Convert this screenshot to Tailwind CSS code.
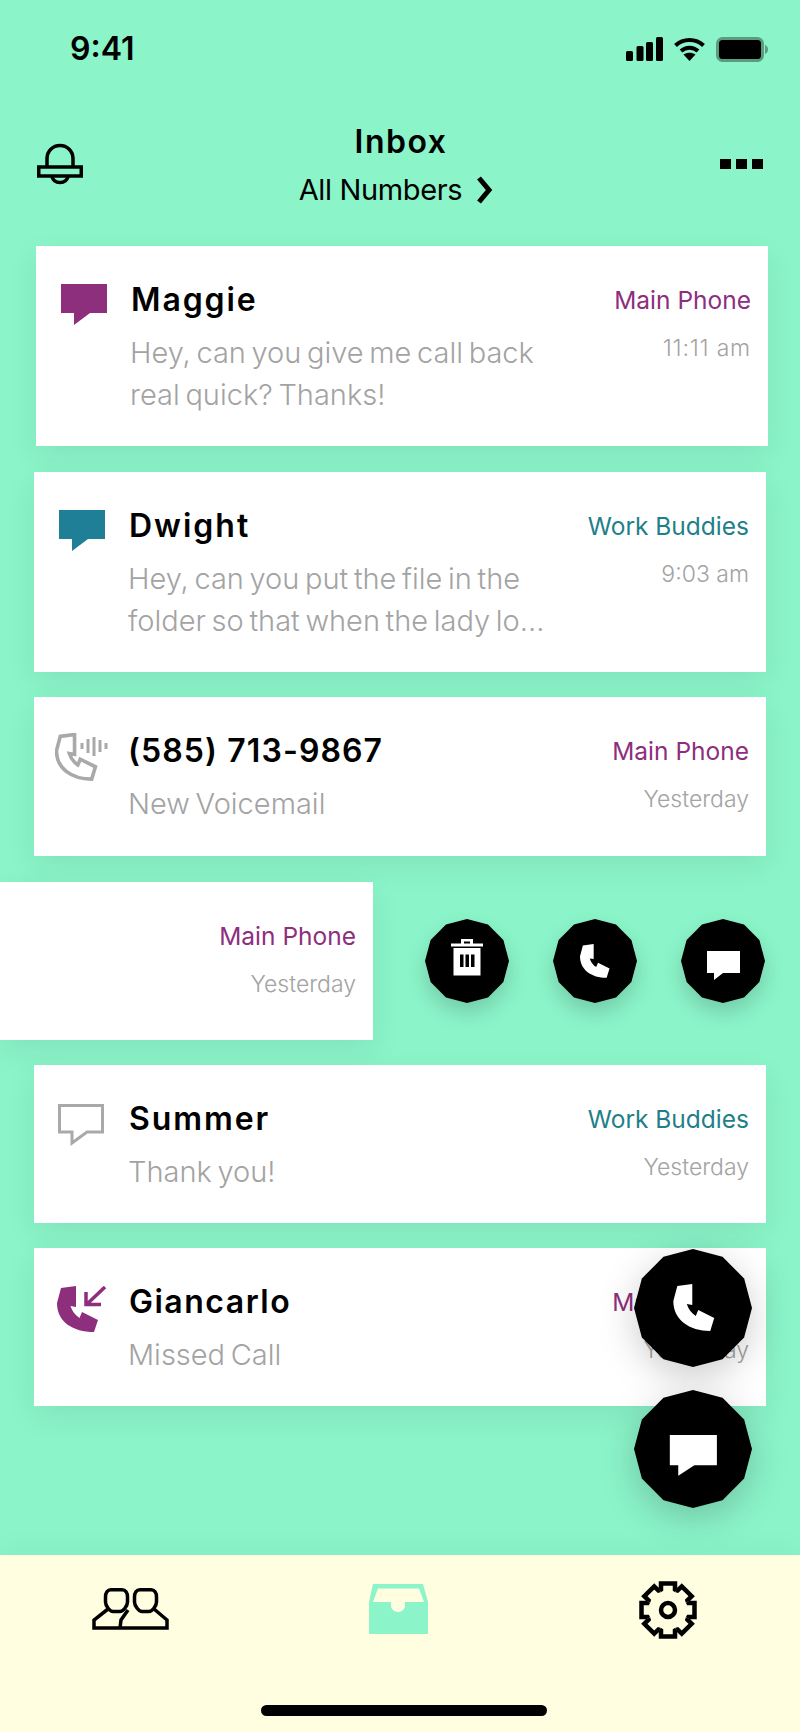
<!DOCTYPE html>
<html lang="en">
<head>
    <meta charset="UTF-8">
    <meta name="viewport" content="width=device-width, initial-scale=1.0">
    <title>Inbox</title>
    <script src="https://cdn.jsdelivr.net/npm/@tailwindcss/browser@4"></script>
</head>
<body class="bg-[#8bf4c9] font-[Inter,sans-serif] text-black">
<div class="relative w-[800px] h-[1732px] overflow-hidden flex flex-col">

    <!-- Status bar -->
    <div class="flex items-center justify-between h-[24px] mt-[37px] pl-[70px] pr-[32px]">
        <span class="text-[32px] leading-[24px] font-semibold">9:41</span>
        <div class="flex items-center">
            <svg width="37" height="24" viewBox="0 0 37 24"><rect x="0" y="14" width="7" height="10" rx="1.5"/><rect x="10.500" y="9" width="7" height="15" rx="1.5"/><rect x="20" y="5" width="7" height="19" rx="1.5"/><rect x="30" y="0" width="7" height="24" rx="1.5"/></svg>
            <svg class="ml-[10px]" width="33" height="24" viewBox="0 0 33 24"><path d="M2.500 8.500C10 1 23 1 30.500 8.500M8 14C13 9.500 20 9.500 25 14" fill="none" stroke="#000" stroke-width="4"/><path d="M16.500 24L10.500 17.500C14 15 19 15 22.500 17.500Z"/></svg>
            <svg class="ml-[10px]" width="52" height="25" viewBox="0 0 52 25"><rect x="1.500" y="1.500" width="45" height="22" rx="5" fill="#000" stroke="#5b9c80" stroke-width="3"/><path d="M49 8c2 1 3 2 3 4.500s-1 3.500-3 4.500z" fill="#5b9c80"/></svg>
        </div>
    </div>

    <!-- Header -->
    <div class="relative flex justify-center h-[119px] mt-[66px]">
        <svg class="absolute left-[37px] top-[16px]" width="46" height="43" viewBox="0 0 46 43" fill="none" stroke="#000" stroke-width="3.500"><path d="M10 24V15.500a13 13 0 0 1 26 0V24"/><rect x="1.750" y="24" width="42.500" height="9"/><path d="M15 33a8 6.500 0 0 0 16 0"/></svg>
        <div class="flex flex-col items-center">
            <div class="text-[32px] leading-[30px] font-semibold tracking-[1.5px] ml-[2px]">Inbox</div>
            <div class="flex items-center mt-[17px] mr-[8px]">
                <span class="text-[29px] leading-[32px] tracking-[-0.35px]">All Numbers</span>
                <svg class="ml-[14px]" width="17" height="28" viewBox="0 0 17 28" fill="none" stroke="#000" stroke-width="5"><path d="M3 2L13 14L3 26"/></svg>
            </div>
        </div>
        <div class="absolute left-[720px] top-[32px] flex gap-[5px]">
            <div class="w-[11px] h-[10px] bg-black"></div>
            <div class="w-[11px] h-[10px] bg-black"></div>
            <div class="w-[11px] h-[10px] bg-black"></div>
        </div>
    </div>

    <!-- Message list -->
    <div class="flex flex-col">

        <div class="flex w-[732px] h-[200px] ml-[36px] bg-white shadow-[0_10px_30px_rgba(0,0,0,0.07)] pt-[34px] pl-[25px] pr-[17px]">
            <div class="w-[70px] pt-[4px]">
                <svg width="46" height="42" viewBox="0 0 46 42" fill="#8d2f7d"><path d="M0 0H46V29H29L13 41V29H0Z"/></svg>
            </div>
            <div class="flex-1">
                <div class="text-[32px] leading-[40px] font-semibold tracking-[1.9px]">Maggie</div>
                <div class="mt-[12px] -ml-[1px] text-[29px] leading-[42px] font-light [word-spacing:-2.5px] text-[#a3a3a3] whitespace-nowrap">Hey, can you give me call back<br>real quick? Thanks!</div>
            </div>
            <div class="text-right">
                <div class="text-[24.500px] leading-[40px] text-[#8d2f7d]">Main Phone</div>
                <div class="mt-[12px] text-[23px] leading-[32px] font-light tracking-[0.8px] text-[#a3a3a3]">11:11 am</div>
            </div>
        </div>

        <div class="flex w-[732px] h-[200px] ml-[34px] mt-[26px] bg-white shadow-[0_10px_30px_rgba(0,0,0,0.07)] pt-[34px] pl-[25px] pr-[17px]">
            <div class="w-[70px] pt-[4px]">
                <svg width="46" height="42" viewBox="0 0 46 42" fill="#1f7f96"><path d="M0 0H46V29H29L13 41V29H0Z"/></svg>
            </div>
            <div class="flex-1">
                <div class="text-[32px] leading-[40px] font-semibold tracking-[2px]">Dwight</div>
                <div class="mt-[12px] -ml-[1px] text-[29px] leading-[42px] font-light [word-spacing:-2.5px] text-[#a3a3a3] whitespace-nowrap">Hey, can you put the file in the<br>folder so that when the lady lo...</div>
            </div>
            <div class="text-right">
                <div class="text-[24.500px] leading-[40px] text-[#1f7f8a]">Work Buddies</div>
                <div class="mt-[12px] text-[23px] leading-[32px] font-light text-[#a3a3a3]">9:03 am</div>
            </div>
        </div>

        <div class="flex w-[732px] h-[159px] ml-[34px] mt-[25px] bg-white shadow-[0_10px_30px_rgba(0,0,0,0.07)] pt-[34px] pl-[21px] pr-[17px]">
            <div class="w-[74px] pt-[2px]">
                <svg width="54" height="50" viewBox="0 0 54 50" fill="none" stroke="#a9a9a9"><path transform="translate(1.500 1.500) scale(0.95)" stroke-width="3.800" d="M4 2L19 0V21L13.500 20C15 25 18 29 22.500 32L25 26L41 34L37 47C16 47 0 36 0 17Z"/><path stroke-width="3" d="M27 10V16M33 6V20M39 4V23M45 7V19M51 10V16"/></svg>
            </div>
            <div class="flex-1">
                <div class="text-[32px] leading-[40px] font-semibold tracking-[1.1px] -ml-[1px]">(585) 713-9867</div>
                <div class="mt-[12px] -ml-[1px] text-[29px] leading-[42px] font-light [word-spacing:-2.5px] text-[#a3a3a3]">New Voicemail</div>
            </div>
            <div class="text-right">
                <div class="text-[24.500px] leading-[40px] text-[#8d2f7d]">Main Phone</div>
                <div class="mt-[12px] text-[23px] leading-[32px] font-light text-[#a3a3a3]">Yesterday</div>
            </div>
        </div>

        <!-- Swiped row with its actions -->
        <div class="flex items-center mt-[26px] h-[158px]">
            <div class="w-[373px] h-[158px] bg-white shadow-[0_10px_30px_rgba(0,0,0,0.07)] pt-[34px] pr-[17px] text-right">
                <div class="text-[24.500px] leading-[40px] text-[#8d2f7d]">Main Phone</div>
                <div class="mt-[12px] text-[23px] leading-[32px] font-light text-[#a3a3a3]">Yesterday</div>
            </div>
            <div class="flex gap-[44px] ml-[52px]">
                <svg class="drop-shadow-[0_10px_10px_rgba(0,0,0,0.16)]" width="84" height="84" viewBox="0 0 84 84"><polygon points="42,0 63,5.600 78.400,21 84,42 78.400,63 63,78.400 42,84 21,78.400 5.600,63 0,42 5.600,21 21,5.600"/><path fill="#fff" d="M26 24.500H36V20H48V24.500H58V27.500H26ZM39 24.500H45V22.500H39ZM28.500 29H55.500V56.500H28.500Z"/><path fill="#000" d="M35 35.500H38.500V48H35ZM40.500 35.500H44V48H40.500ZM46 35.500H49.500V48H46Z"/></svg>
                <svg class="drop-shadow-[0_10px_10px_rgba(0,0,0,0.16)]" width="84" height="84" viewBox="0 0 84 84"><polygon points="42,0 63,5.600 78.400,21 84,42 78.400,63 63,78.400 42,84 21,78.400 5.600,63 0,42 5.600,21 21,5.600"/><path fill="#fff" transform="translate(27 25) scale(0.72)" d="M4 2L19 0V21L13.500 20C15 25 18 29 22.500 32L25 26L41 34L37 47C16 47 0 36 0 17Z"/></svg>
                <svg class="drop-shadow-[0_10px_10px_rgba(0,0,0,0.16)]" width="84" height="84" viewBox="0 0 84 84"><polygon points="42,0 63,5.600 78.400,21 84,42 78.400,63 63,78.400 42,84 21,78.400 5.600,63 0,42 5.600,21 21,5.600"/><path fill="#fff" d="M26 32H59V54H42L33 61V54H26Z"/></svg>
            </div>
        </div>

        <div class="flex w-[732px] h-[158px] ml-[34px] mt-[25px] bg-white shadow-[0_10px_30px_rgba(0,0,0,0.07)] pt-[34px] pl-[24px] pr-[17px]">
            <div class="w-[71px] pt-[5px]">
                <svg width="46" height="42" viewBox="0 0 46 42" fill="none" stroke="#a9a9a9" stroke-width="3"><path d="M1.500 1.500H44.500V28H29L14 39V28H1.500Z"/></svg>
            </div>
            <div class="flex-1">
                <div class="text-[32px] leading-[40px] font-semibold tracking-[1.9px]">Summer</div>
                <div class="mt-[12px] -ml-[1px] text-[29px] leading-[42px] font-light [word-spacing:-2.5px] text-[#a3a3a3]">Thank you!</div>
            </div>
            <div class="text-right">
                <div class="text-[24.500px] leading-[40px] text-[#1f7f8a]">Work Buddies</div>
                <div class="mt-[12px] text-[23px] leading-[32px] font-light text-[#a3a3a3]">Yesterday</div>
            </div>
        </div>

        <div class="flex w-[732px] h-[158px] ml-[34px] mt-[25px] bg-white shadow-[0_10px_30px_rgba(0,0,0,0.07)] pt-[34px] pl-[23px] pr-[17px]">
            <div class="w-[72px] pt-[4px]">
                <svg width="50" height="47" viewBox="0 0 50 47" fill="#8d2f7d"><path d="M4 2L19 0V21L13.500 20C15 25 18 29 22.500 32L25 26L41 34L37 46C16 46 0 36 0 17Z"/><path fill="none" stroke="#8d2f7d" stroke-width="3.500" d="M48 1L29 19M29 6V18.500H44"/></svg>
            </div>
            <div class="flex-1">
                <div class="text-[32px] leading-[40px] font-semibold tracking-[1.5px]">Giancarlo</div>
                <div class="mt-[12px] -ml-[1px] text-[29px] leading-[42px] font-light [word-spacing:-2.5px] text-[#a3a3a3]">Missed Call</div>
            </div>
            <div class="text-right">
                <div class="text-[24.500px] leading-[40px] text-[#8d2f7d]">Main Phone</div>
                <div class="mt-[12px] text-[23px] leading-[32px] font-light text-[#a3a3a3]">Yesterday</div>
            </div>
        </div>
    </div>

    <!-- Floating actions -->
    <div class="absolute left-[634px] top-[1249px] flex flex-col gap-[23px]">
        <svg class="drop-shadow-[0_10px_18px_rgba(0,0,0,0.2)]" width="118" height="118" viewBox="0 0 84 84"><polygon points="42,0 63,5.600 78.400,21 84,42 78.400,63 63,78.400 42,84 21,78.400 5.600,63 0,42 5.600,21 21,5.600"/><path fill="#fff" transform="translate(28 25) scale(0.71)" d="M4 2L19 0V21L13.500 20C15 25 18 29 22.500 32L25 26L41 34L37 47C16 47 0 36 0 17Z"/></svg>
        <svg class="drop-shadow-[0_10px_18px_rgba(0,0,0,0.2)]" width="118" height="118" viewBox="0 0 84 84"><polygon points="42,0 63,5.600 78.400,21 84,42 78.400,63 63,78.400 42,84 21,78.400 5.600,63 0,42 5.600,21 21,5.600"/><path fill="#fff" d="M25.500 32H59V53.500H43L31.500 61V53.500H25.500Z"/></svg>
    </div>

    <!-- Tab bar -->
    <div class="relative mt-auto h-[177px] bg-[#fffee0] shadow-[0_-8px_24px_rgba(0,0,0,0.03)]">
        <div class="flex justify-between items-start pt-[26px] pl-[91px] pr-[103px]">
            <svg class="mt-[7px]" width="78" height="42" viewBox="0 0 78 42" fill="none" stroke="#000" stroke-width="3.500"><path d="M20 1.750H31C34.500 1.750 36.500 5 36.500 9V14C36.500 18 32 23.500 29 23.500H22C19 23.500 14.500 18 14.500 14V9C14.500 5 16.500 1.750 20 1.750Z"/><path d="M49 1.750H60C63.500 1.750 65.500 5 65.500 9V14C65.500 18 61 23.500 58 23.500H51C48 23.500 43.500 18 43.500 14V9C43.500 5 45.500 1.750 49 1.750Z"/><path d="M17 21L3 32V40H76V32L63 21"/><path d="M37 22L30 32L29 40"/></svg>
            <svg class="mr-[11px] mt-[3px]" width="59" height="50" viewBox="0 0 59 50"><path fill="#8bf4c9" d="M4 0H54L59 18V50H0V18Z"/><path fill="#fffee0" d="M9 4.500H50L55 18H36V22a7 6 0 0 1-14 0V18H4Z"/></svg>
            <svg width="58" height="58" viewBox="0 0 58 58" fill="none" stroke="#000" stroke-width="4.500"><path d="M20.770 9.140L22 8.500V2.500H36V8.500L37.230 9.140"/><path transform="rotate(45 29 29)" d="M20.770 9.140L22 8.500V2.500H36V8.500L37.230 9.140"/><path transform="rotate(90 29 29)" d="M20.770 9.140L22 8.500V2.500H36V8.500L37.230 9.140"/><path transform="rotate(135 29 29)" d="M20.770 9.140L22 8.500V2.500H36V8.500L37.230 9.140"/><path transform="rotate(180 29 29)" d="M20.770 9.140L22 8.500V2.500H36V8.500L37.230 9.140"/><path transform="rotate(225 29 29)" d="M20.770 9.140L22 8.500V2.500H36V8.500L37.230 9.140"/><path transform="rotate(270 29 29)" d="M20.770 9.140L22 8.500V2.500H36V8.500L37.230 9.140"/><path transform="rotate(315 29 29)" d="M20.770 9.140L22 8.500V2.500H36V8.500L37.230 9.140"/><circle cx="29" cy="29" r="7"/></svg>
        </div>
        <div class="absolute left-[261px] top-[150px] w-[286px] h-[11px] rounded-full bg-black"></div>
    </div>
</div>
</body>
</html>
